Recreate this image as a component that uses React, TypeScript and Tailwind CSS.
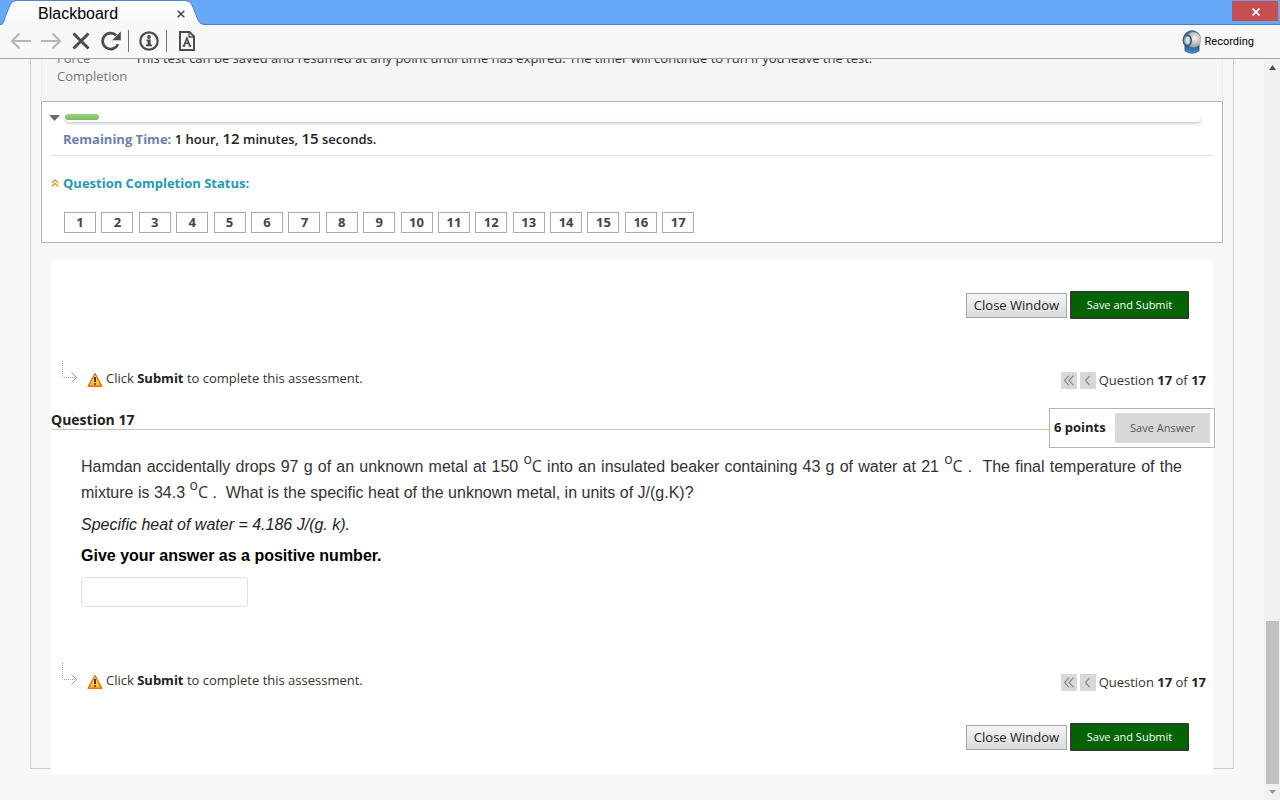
import React from "react";

const questions = Array.from({ length: 17 }, (_, i) => i + 1);

function TabStrip() {
  return (
    <header className="flex h-[25px] shrink-0 items-start justify-between border-b border-[#4b7fc0] bg-[#66a9f8]">
      <div className="relative -mb-px h-[25px] w-[206px]">
        <svg className="absolute inset-0" width="206" height="25" viewBox="0 0 206 25" aria-hidden="true">
          <defs>
            <linearGradient id="tabFill" x1="0" y1="0" x2="0" y2="1">
              <stop offset="0" stopColor="#ffffff" />
              <stop offset="1" stopColor="#f8f8f8" />
            </linearGradient>
          </defs>
          <path d="M0 25 C5 25 4 20 6 15 L10 5 Q12 1 16 1 H186 Q190 1 192 5 L198 20 Q200 24.500 204 24.500 V25 Z" fill="url(#tabFill)" />
          <path d="M0 24.500 C4 24 4 20 6 15 L10 5 Q12 .5 16 .5 H186 Q190 .5 192 5 L198 20 Q200 24.500 204 24.500" fill="none" stroke="#5285c4" />
        </svg>
        <div className="relative flex h-full items-center pl-[38px] pt-0.5">
          <span className="w-[135px] text-base leading-6 text-black">Blackboard</span>
          <button type="button" aria-label="Close tab" className="flex h-4 w-4 items-center justify-center">
            <svg width="8" height="8" viewBox="0 0 8 8" stroke="#444" strokeWidth="1.500" aria-hidden="true">
              <path d="M.7 .7 7.300 7.300M7.300 .7 .7 7.300" />
            </svg>
          </button>
        </div>
      </div>
      <button type="button" aria-label="Close" className="mr-0.5 mt-px flex h-5 w-[46px] items-center justify-center bg-[#c84f4f] pl-0.5 pt-px">
        <svg width="8" height="8" viewBox="0 0 8 8" stroke="#fff" strokeWidth="1.600" aria-hidden="true">
          <path d="M.5 .5 7.500 7.500M7.500 .5 .5 7.500" />
        </svg>
      </button>
    </header>
  );
}

function Toolbar() {
  return (
    <nav className="flex h-[34px] shrink-0 items-center border-b border-[#a3a3a3] bg-[#f8f8f8] pb-0.5 pl-[10px] pr-[26px]">
      <button type="button" aria-label="Back">
        <svg width="21" height="18" viewBox="0 0 21 18" fill="none" stroke="#b5b5b5" strokeWidth="2" aria-hidden="true">
          <path d="M21 9H2M9.500 1.500 2 9l7.500 7.500" />
        </svg>
      </button>
      <button type="button" aria-label="Forward" className="ml-[10px]">
        <svg width="21" height="18" viewBox="0 0 21 18" fill="none" stroke="#b5b5b5" strokeWidth="2" aria-hidden="true">
          <path d="M0 9h19M11.500 1.500 19 9l-7.500 7.500" />
        </svg>
      </button>
      <button type="button" aria-label="Stop" className="ml-[10px]">
        <svg width="18" height="18" viewBox="0 0 18 18" fill="none" stroke="#4c4c4c" strokeWidth="3" aria-hidden="true">
          <path d="M1.500 1.500l15 15M16.500 1.500l-15 15" />
        </svg>
      </button>
      <button type="button" aria-label="Reload" className="ml-[10px]">
        <svg width="22" height="20" viewBox="0 0 22 20" aria-hidden="true">
          <path d="M16.300 4.400A8 8 0 1 0 18 13.200" fill="none" stroke="#4c4c4c" strokeWidth="2.700" />
          <path d="M20.800.6v8.600h-8.600Z" fill="#4c4c4c" />
        </svg>
      </button>
      <span className="ml-[6px] h-[22px] w-px bg-[#707070]" />
      <button type="button" aria-label="Information" className="ml-[9px]">
        <svg width="22" height="22" viewBox="0 0 22 22" aria-hidden="true">
          <circle cx="11" cy="11" r="8.700" fill="none" stroke="#4c4c4c" strokeWidth="2.200" />
          <circle cx="11" cy="7" r="1.900" fill="#4c4c4c" />
          <path d="M8.500 9.500h4.200v5h1.300v1.800H8v-1.800h1.500v-3.200h-1Z" fill="#4c4c4c" />
        </svg>
      </button>
      <span className="ml-[6px] h-[22px] w-px bg-[#707070]" />
      <button type="button" aria-label="Text size" className="ml-[12px]">
        <svg width="16" height="20" viewBox="0 0 16 20" aria-hidden="true">
          <path d="M1 1h9.500L15 5.500V19H1Z" fill="none" stroke="#4c4c4c" strokeWidth="2" />
          <path d="M10 1v5h5" fill="none" stroke="#4c4c4c" strokeWidth="1.300" />
          <path d="M4.800 15 7.900 7.200l3.100 7.800M5.800 12.400h4.200M3.600 14.900h2.600M9.600 14.900h2.600" fill="none" stroke="#4c4c4c" strokeWidth="1.700" />
        </svg>
      </button>
      <div className="ml-auto flex items-center gap-1 pt-0.5">
        <svg width="19" height="24" viewBox="0 0 19 24" aria-hidden="true">
          <defs>
            <radialGradient id="camBall" cx=".6" cy=".4" r=".6">
              <stop offset="0" stopColor="#f5f5f5" />
              <stop offset="1" stopColor="#9b9b9b" />
            </radialGradient>
            <linearGradient id="camBase" x1="0" y1="0" x2="0" y2="1">
              <stop offset="0" stopColor="#1c4d7d" />
              <stop offset="1" stopColor="#4f92cc" />
            </linearGradient>
          </defs>
          <path d="M2.500 14h15v7q-3.500 3-7.500 3t-7.500-3Z" fill="url(#camBase)" />
          <circle cx="10" cy="9" r="8.800" fill="#31689b" />
          <circle cx="11.300" cy="9.800" r="7.700" fill="url(#camBall)" />
          <ellipse cx="5.300" cy="10.300" rx="4" ry="5.200" fill="#8fb6d0" stroke="#4a5961" strokeWidth="1.600" />
          <ellipse cx="5.800" cy="10.300" rx="1.700" ry="3.400" fill="#d5e6ef" />
        </svg>
        <span className="font-[Roboto,sans-serif] text-[11px] leading-4 text-black">Recording</span>
      </div>
    </nav>
  );
}

function FormButtons() {
  return (
    <div className="flex items-center justify-end gap-[3px] pr-6">
      <button type="button" className="h-[25px] w-[101px] border border-[#a5a5a5] bg-linear-to-b from-[#f4f4f4] to-[#dcdcdc] text-[13px] leading-5 text-[#222]">
        Close Window
      </button>
      <button type="submit" className="h-7 w-[119px] rounded-[1px] border-2 border-[#2c3e2c] bg-[#006400] text-[11px] leading-5 text-white">
        Save and Submit
      </button>
    </div>
  );
}

function PageButton({ label, path }: { label: string; path: string }) {
  return (
    <button type="button" aria-label={label} className="flex h-[17px] w-4 items-center justify-center bg-[#d8d8d8]">
      <svg width="12" height="11" viewBox="0 0 12 11" fill="none" stroke="#8a8a8a" strokeWidth="1.200" aria-hidden="true">
        <path d={path} />
      </svg>
    </button>
  );
}

function SubmitStep() {
  return (
    <div className="flex h-7 items-start justify-between pl-[10px] pr-[7px]">
      <div className="flex items-start">
        <svg width="18" height="24" viewBox="0 0 18 24" fill="none" stroke="#a0a0a0" aria-hidden="true">
          <path d="M1.500 0v16.500H14" strokeDasharray="1 1" />
          <path d="M10.500 11.500l5 5-5 5" />
        </svg>
        <svg className="ml-2 mt-[11px]" width="16" height="16" viewBox="0 0 16 16" aria-hidden="true">
          <defs>
            <linearGradient id="warnFill" x1="0" y1="0" x2="0" y2="1">
              <stop offset="0" stopColor="#fff3a0" />
              <stop offset="1" stopColor="#ffb31a" />
            </linearGradient>
          </defs>
          <path d="M8 1.700 14.800 14.200H1.200Z" fill="url(#warnFill)" stroke="#e8711c" strokeWidth="1.400" strokeLinejoin="round" />
          <path d="M8 5v5M8 11.200v1.600" stroke="#26200f" strokeWidth="1.700" />
        </svg>
        <p className="ml-[3px] mt-2 text-[13px] leading-[18px]">
          Click <strong className="font-bold text-[#222]">Submit</strong> to complete this assessment.
        </p>
      </div>
      <div className="mt-[11px] flex gap-[3px]">
        <PageButton label="First question" path="M6 .7 1.500 5.500 6 10.300M10.500 .7 6 5.500l4.500 4.800" />
        <PageButton label="Previous question" path="M7.500 1 3.500 5.500 7.500 10" />
        <p className="text-[13px] leading-4">
          Question <strong className="font-bold text-[#222]">17</strong> of <strong className="font-bold text-[#222]">17</strong>
        </p>
      </div>
    </div>
  );
}

function Degree() {
  return (
    <span className="font-['Open_Sans',sans-serif] leading-none">
      <sup className="-top-2 align-baseline text-sm leading-none">o</sup>C
    </span>
  );
}

function TimerPanel() {
  return (
    <section className="border border-[#b4b4b4] bg-white px-[7px] pb-[9px] pt-[11px]">
      <div className="flex h-[9px] items-center">
        <button type="button" aria-label="Collapse timer" className="w-3">
          <svg width="12" height="7" viewBox="0 0 12 7" aria-hidden="true">
            <path d="M0 1h11L5.500 7Z" fill="#6b6b6b" />
          </svg>
        </button>
        <div className="ml-1 mr-[14px] h-[9px] flex-1 rounded-full bg-[#fdfdfd] pt-px shadow-[0_2px_3px_#d0d0d0]">
          <div className="h-[6px] w-[34px] rounded-full bg-linear-to-b from-[#9bd27c] to-[#7fbd60]" />
        </div>
      </div>
      <p className="mx-0.5 mt-2 border-b border-[#e2e2e2] pb-[7px] pl-3 text-[13px] font-semibold leading-[18px] text-[#222]">
        <span className="font-bold text-[#6b7fae]">Remaining Time:</span> 1 hour, <span className="text-[15px] leading-none">12</span> minutes, <span className="text-[15px] leading-none">15</span> seconds.
      </p>
      <h2 className="ml-0.5 mt-[18px] flex items-center gap-1 text-[13px] font-bold leading-[18px] text-[#2797b3]">
        <svg width="8" height="8" viewBox="0 0 8 8" fill="none" stroke="#cf9a32" strokeWidth="1.300" aria-hidden="true">
          <path d="M.7 4 4 1l3.300 3M.7 7.500 4 4.500l3.300 3" />
        </svg>
        Question Completion Status:
      </h2>
      <ol className="ml-[15px] mt-5 text-[13px] leading-[19px]">
        {questions.map((n) => (
          <React.Fragment key={n}>
            <li className="mr-0.5 inline-block w-8 border border-[#a9a9a9] text-center align-top font-bold text-[#444]">
              <a href={"#question-" + n} className="block">{n}</a>
            </li>{" "}
          </React.Fragment>
        ))}
      </ol>
    </section>
  );
}

function QuestionPanel() {
  return (
    <form className="-mb-[7px] ml-[10px] mr-[10px] mt-[18px] bg-white pb-6 pt-[30px]" onSubmit={(e) => e.preventDefault()}>
      <FormButtons />
      <div className="h-[42px]" />
      <SubmitStep />
      <div className="relative mt-[19px] h-[22px] border-b border-[#c4c4c4]">
        <svg className="absolute left-[10px] top-1" width="18" height="18" viewBox="0 0 18 18" fill="none" stroke="#b8b8b8" aria-hidden="true">
          <path d="M10.500 1l4 4M2.500 12v6" strokeDasharray="1 1" />
        </svg>
        <h3 id="question-17" className="relative pt-[3px] text-sm font-bold leading-[18px] text-[#222]">Question 17</h3>
        <div className="absolute -right-0.5 top-0 flex h-10 w-[166px] items-center justify-between border border-[#b4b4b4] bg-white pl-1 pr-1">
          <span className="text-[13px] font-bold text-[#222]">6 points</span>
          <button type="button" className="h-[30px] w-[95px] bg-[#d8d8d8] text-[11px] text-[#555]">Save Answer</button>
        </div>
      </div>
      <div className="mt-6 pl-[30px] pr-[31px] font-['Liberation_Sans',Arial,sans-serif] text-base text-[#333]">
        <p className="text-justify leading-[26px]">
          Hamdan accidentally drops 97 g of an unknown metal at 150 <Degree /> into an insulated beaker containing 43 g of water at 21 <Degree /> .&nbsp; The final temperature of the mixture is 34.3 <Degree /> .&nbsp; What is the specific heat of the unknown metal, in units of J/(g.K)?
        </p>
        <p className="mt-2 italic leading-[22px] text-[#222]">Specific heat of water = 4.186 J/(g. k).</p>
        <label htmlFor="answer" className="mt-[9px] block font-bold leading-[22px] text-black">Give your answer as a positive number.</label>
        <input id="answer" type="text" className="mt-[10px] block h-[30px] w-[167px] rounded-[3px] border border-[#e2e2e2] bg-white px-2" />
      </div>
      <div className="h-14" />
      <SubmitStep />
      <div className="h-8" />
      <FormButtons />
    </form>
  );
}

export default function App() {
  return (
    <div className="flex h-screen flex-col overflow-hidden bg-[#f8f8f8] font-['Liberation_Sans',Arial,sans-serif]">
      <TabStrip />
      <Toolbar />
      <div className="flex min-h-0 flex-1">
        <main className="min-w-0 flex-1 overflow-hidden px-[30px] font-['Open_Sans',sans-serif] text-[13px] text-[#333]">
          <div className="-mt-[11px] border border-[#cfcfcf] px-[10px]">
            <dl className="grid grid-cols-[78px_1fr] border-x border-[#eeeeee] bg-[#f5f5f5] pb-4 pl-[15px] leading-[18px]">
              <dt className="text-[#777]">Force Completion</dt>
              <dd>This test can be saved and resumed at any point until time has expired. The timer will continue to run if you leave the test.</dd>
            </dl>
            <TimerPanel />
            <QuestionPanel />
          </div>
        </main>
        <div className="flex w-4 shrink-0 flex-col items-center bg-[#f1f1f1] pb-[6px] pt-[6px]" aria-hidden="true">
          <svg width="7" height="5" viewBox="0 0 7 5"><path d="M0 5h7L3.500 0Z" fill="#505050" /></svg>
          <div className="flex-1" />
          <div className="mb-[6px] ml-px h-[163px] w-[13px] bg-[#c1c1c1]" />
          <svg width="7" height="4" viewBox="0 0 7 4"><path d="M0 0h7L3.500 4Z" fill="#999" /></svg>
        </div>
      </div>
    </div>
  );
}
